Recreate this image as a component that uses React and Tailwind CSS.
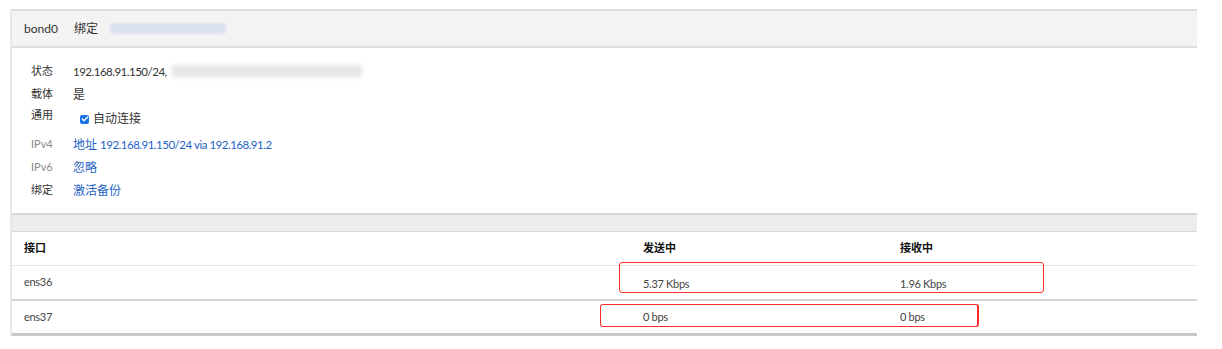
import { Check } from 'lucide-react'

const font = { fontFamily: 'Lato, "Noto Sans CJK SC", sans-serif' }

const ROWS = [
  { name: 'ens36', tx: '5.37 Kbps', rx: '1.96 Kbps' },
  { name: 'ens37', tx: '0 bps', rx: '0 bps' },
]

function Field({ label, muted, children }) {
  return (
    <div className="flex items-center h-[23px]">
      <div className={`w-[42px] text-[11px] ${muted ? 'text-[#8a8a8a]' : 'text-[#333]'}`}>{label}</div>
      <div className="text-[12px] text-[#333]">{children}</div>
    </div>
  )
}

// narrow latin digits, like the original UI font
const Num = ({ children }) => <span className="text-[11.5px] tracking-[-0.5px]">{children}</span>

export default function App() {
  return (
    <div className="w-[1222px] h-[349px] bg-white pt-[9px] pl-[10px] relative" style={font}>
      <div className="w-[1187px] border-l-2 border-[#e8e8e8]">
        {/* header */}
        <div className="h-[39px] bg-[#f3f3f3] border-t-2 border-b-2 border-[#dedede] flex items-center pl-[12px] text-[12px] text-[#333]">
          <span>bond0</span>
          <span className="ml-[16px]">绑定</span>
          <span className="ml-[12px] w-[116px] h-[11px] rounded-sm bg-[#dbe2ee] blur-[1px]" />
        </div>

        {/* details */}
        <div className="h-[165px] pt-[12px] pl-[19px]">
          <Field label="状态">
            <span className="inline-flex items-center">
              <Num>192.168.91.150/24,</Num>
              <span className="ml-[5px] inline-block w-[190px] h-[12px] bg-[#e6e6e6] blur-[2px]" />
            </span>
          </Field>
          <Field label="载体">是</Field>
          <div className="flex items-start h-[27px]">
            <div className="w-[42px] text-[11px] text-[#333] pt-[1px]">通用</div>
            <label className="flex items-center gap-[4px] ml-[7px] mt-[4px] text-[12px] text-[#333]">
              <span className="w-[9px] h-[9px] rounded-[2px] bg-[#1a73e8] flex items-center justify-center">
                <Check size={8} strokeWidth={4} className="text-white" />
              </span>
              自动连接
            </label>
          </div>
          <Field label="IPv4" muted>
            <span className="text-[#1e63c4]">地址 <Num>192.168.91.150/24 via 192.168.91.2</Num></span>
          </Field>
          <Field label="IPv6" muted>
            <span className="text-[#1e63c4]">忽略</span>
          </Field>
          <Field label="绑定">
            <span className="text-[#1e63c4]">激活备份</span>
          </Field>
        </div>

        {/* gray band */}
        <div className="h-[19px] bg-[#ececec] border-t-2 border-b border-[#d8d8d8]" />

        {/* table */}
        <div className="text-[11px]">
          <div className="h-[34px] grid grid-cols-[619px_257px_1fr] items-center pl-[12px] border-b border-[#e4e4e4] font-bold text-[#111]">
            <span>接口</span>
            <span>发送中</span>
            <span>接收中</span>
          </div>
          {ROWS.map((r, i) => (
            <div
              key={r.name}
              className={`h-[35px] grid grid-cols-[619px_257px_1fr] items-center pl-[12px] text-[#444] tracking-[-0.3px] ${i === ROWS.length - 1 ? 'border-b-[3px] border-[#c8c8c8]' : 'border-b-2 border-[#d4d4d4]'}`}
            >
              <span>{r.name}</span>
              <span className={i === 0 ? 'pt-[3px]' : ''}>{r.tx}</span>
              <span className={i === 0 ? 'pt-[3px]' : ''}>{r.rx}</span>
            </div>
          ))}
        </div>
      </div>

      {/* annotation boxes */}
      <div className="absolute left-[619px] top-[262px] w-[425px] h-[31px] border border-[#ff2a2a] rounded-[3px]" />
      <div className="absolute left-[600px] top-[304px] w-[379px] h-[23px] border border-[#ff2a2a] border-r-2 rounded-[3px]" />
    </div>
  )
}
